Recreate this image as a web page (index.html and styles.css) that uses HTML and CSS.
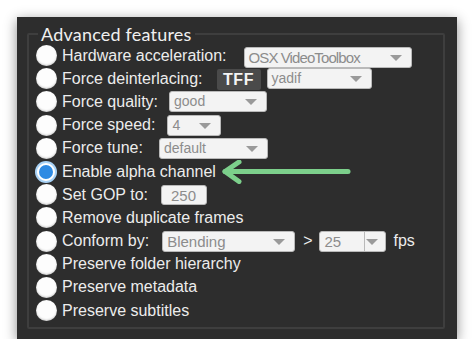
FILE: index.html
```html
<!DOCTYPE html>
<html lang="en">
<head>
    <meta charset="UTF-8">
    <title>Advanced features</title>
    <link rel="stylesheet" href="styles.css">
</head>
<body>
    <div class="panel">
        <fieldset class="features">
            <legend>Advanced features</legend>

            <div class="row">
                <span class="radio"></span>
                <span class="label">Hardware acceleration:</span>
                <span class="select sel-hw tight">OSX VideoToolbox</span>
            </div>
            <div class="row">
                <span class="radio"></span>
                <span class="label">Force deinterlacing:</span>
                <span class="toggle">TFF</span>
                <span class="select sel-deint">yadif</span>
            </div>
            <div class="row">
                <span class="radio"></span>
                <span class="label">Force quality:</span>
                <span class="select sel-quality">good</span>
            </div>
            <div class="row">
                <span class="radio"></span>
                <span class="label">Force speed:</span>
                <span class="select sel-speed">4</span>
            </div>
            <div class="row">
                <span class="radio"></span>
                <span class="label">Force tune:</span>
                <span class="select sel-tune">default</span>
            </div>
            <div class="row">
                <span class="radio checked"></span>
                <span class="label">Enable alpha channel</span>
                <svg class="pointer" width="134" height="24" viewBox="0 0 134 24">
                    <g fill="none" stroke="#7ccf8b" stroke-width="5" stroke-linecap="round" stroke-linejoin="round">
                        <path d="M5 11.5 H128"/>
                        <path d="M19 2 L5 11.5 L19 21.5"/>
                    </g>
                </svg>
            </div>
            <div class="row">
                <span class="radio"></span>
                <span class="label">Set GOP to:</span>
                <span class="field field-gop">250</span>
            </div>
            <div class="row">
                <span class="radio"></span>
                <span class="label">Remove duplicate frames</span>
            </div>
            <div class="row">
                <span class="radio"></span>
                <span class="label">Conform by:</span>
                <span class="select sel-conform">Blending</span>
                <span class="label gt">&gt;</span>
                <span class="combo">
                    <span class="combo-value">25</span>
                    <span class="combo-btn"></span>
                </span>
                <span class="label fps">fps</span>
            </div>
            <div class="row">
                <span class="radio"></span>
                <span class="label">Preserve folder hierarchy</span>
            </div>
            <div class="row">
                <span class="radio"></span>
                <span class="label">Preserve metadata</span>
            </div>
            <div class="row">
                <span class="radio"></span>
                <span class="label">Preserve subtitles</span>
            </div>
        </fieldset>
    </div>
</body>
</html>
```

FILE: styles.css
```css
body {
    margin: 0;
    background-color: #ffffff;
    font-family: 'Liberation Sans', Arial, sans-serif;
}

.panel {
    width: 440px;
    height: 322px;
    margin: 17px 0 0 17px;
    padding: 7px 12px 0 10px;
    box-sizing: border-box;
    background-color: #2d2d2d;
    box-shadow: 0 3px 12px rgba(0, 0, 0, 0.45);
}

.features {
    margin: 0;
    height: 305px;
    box-sizing: border-box;
    padding: 0 0 0 7px;
    border: 2px solid #3e3e3e;
    border-radius: 2px;
}

.features legend {
    padding: 0 3px;
    margin-left: 2px;
    font-family: Lato, 'Open Sans', sans-serif;
    font-size: 18px;
    line-height: 20px;
    color: #f0f0f0;
    letter-spacing: 0.2px;
}

.row {
    display: flex;
    align-items: center;
    height: 23.2px;
}

.radio {
    flex: none;
    width: 21px;
    height: 21px;
    border-radius: 50%;
    background-color: #fdfdfd;
    box-shadow: inset 0 -1px 2px rgba(0, 0, 0, 0.2);
    box-sizing: border-box;
    margin: 0 5px 0 0;
}

.radio.checked {
    background-color: #2f8be3;
    border: 2px solid #ffffff;
    box-shadow: 0 0 0 2px #a8d2f6;
    width: 18px;
    height: 18px;
    margin: 0 7px 0 1px;
}

.label {
    font-size: 16px;
    color: #ececec;
    white-space: nowrap;
}

.select,
.field,
.combo {
    position: relative;
    flex: none;
    height: 21px;
    box-sizing: border-box;
    padding: 0 0 0 4px;
    background-color: #f3f3f3;
    border: 1px solid #b9b9b9;
    border-radius: 3px;
    font-size: 14px;
    line-height: 19px;
    color: #8c8c8c;
}

.select::after,
.combo-btn::after {
    content: "";
    position: absolute;
    right: 9px;
    top: 7px;
    border-left: 6px solid transparent;
    border-right: 6px solid transparent;
    border-top: 6px solid #9a9a9a;
}

.tight {
    font-size: 15px;
    letter-spacing: -0.9px;
}

.sel-hw {
    width: 168px;
    margin: 3px 0 0 17px;
}

.toggle {
    flex: none;
    width: 44px;
    height: 21px;
    margin: 2px 0 0 14px;
    background-color: #4a4a4a;
    border-radius: 2px;
    color: #f4f4f4;
    font-size: 16px;
    font-weight: bold;
    line-height: 21px;
    text-align: center;
    letter-spacing: 0.5px;
}

.sel-deint {
    width: 105px;
    margin: 0 0 0 6px;
}

.sel-quality {
    width: 98px;
    margin-left: 11px;
}

.sel-speed {
    width: 54px;
    margin-left: 12px;
}

.sel-tune {
    width: 109px;
    margin-left: 16px;
}

.pointer {
    flex: none;
    margin: 0 0 0 4px;
}

.field-gop {
    width: 46px;
    height: 20px;
    margin-left: 13px;
    padding-left: 9px;
    font-size: 15px;
}

.sel-conform {
    width: 133px;
    margin-left: 13px;
    font-size: 15px;
}

.gt {
    margin: 0 7px 0 8px;
}

.combo {
    display: flex;
    width: 67px;
    padding: 0;
    font-size: 15px;
}

.combo-value {
    width: 40px;
    padding-left: 4px;
    border-right: 1px solid #b9b9b9;
}

.combo-btn {
    position: relative;
    flex: 1;
}

.combo-btn::after {
    right: 7px;
}

.fps {
    margin-left: 7px;
}
```
